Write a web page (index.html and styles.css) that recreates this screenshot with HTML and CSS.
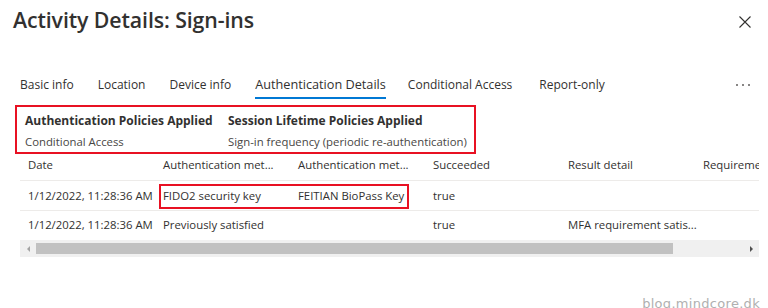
FILE: index.html
```html
<!DOCTYPE html>
<html lang="en">
<head>
<meta charset="utf-8">
<title>Activity Details: Sign-ins</title>
<link rel="stylesheet" href="styles.css">
</head>
<body>
<div class="blade">
  <header class="blade-header">
    <h1 class="blade-title">Activity Details: Sign-ins</h1>
    <button class="close-btn" aria-label="Close">
      <svg width="12" height="12" viewBox="0 0 12 12"><path d="M0.5 0.5 L11.5 11.5 M11.5 0.5 L0.5 11.5" stroke="#323130" stroke-width="1.1" fill="none"/></svg>
    </button>
  </header>

  <nav class="tabs">
    <span class="tab">Basic info</span>
    <span class="tab">Location</span>
    <span class="tab">Device info</span>
    <span class="tab active">Authentication Details</span>
    <span class="tab wide">Conditional Access</span>
    <span class="tab">Report-only</span>
    <span class="tab-more"><i></i><i></i><i></i></span>
  </nav>

  <section class="policies">
    <div class="policy first">
      <div class="policy-title">Authentication Policies Applied</div>
      <div class="policy-value">Conditional Access</div>
    </div>
    <div class="policy">
      <div class="policy-title">Session Lifetime Policies Applied</div>
      <div class="policy-value">Sign-in frequency (periodic re-authentication)</div>
    </div>
  </section>

  <div class="grid-wrap">
    <div class="grid">
      <div class="row head">
        <div class="cell">Date</div>
        <div class="cell">Authentication met...</div>
        <div class="cell">Authentication met...</div>
        <div class="cell">Succeeded</div>
        <div class="cell">Result detail</div>
        <div class="cell">Requirement</div>
      </div>
      <div class="row">
        <div class="cell">1/12/2022, 11:28:36 AM</div>
        <div class="cell">FIDO2 security key</div>
        <div class="cell">FEITIAN BioPass Key</div>
        <div class="cell">true</div>
        <div class="cell"></div>
        <div class="cell"></div>
        <div class="highlight"></div>
      </div>
      <div class="row">
        <div class="cell">1/12/2022, 11:28:36 AM</div>
        <div class="cell">Previously satisfied</div>
        <div class="cell"></div>
        <div class="cell">true</div>
        <div class="cell">MFA requirement satis...</div>
        <div class="cell"></div>
      </div>
    </div>
    <div class="hscroll">
      <span class="arrow left"></span>
      <div class="track"><div class="thumb"></div></div>
      <span class="arrow right"></span>
    </div>
  </div>

  <div class="watermark">blog.mindcore.dk</div>
</div>
</body>
</html>
```

FILE: styles.css
```css
* { box-sizing: border-box; }

html, body {
  margin: 0;
  padding: 0;
  background: #ffffff;
}

body {
  font-family: "Open Sans", "Noto Sans", "Liberation Sans", sans-serif;
  color: #323130;
  font-size: 12px;
  width: 768px;
  height: 308px;
  overflow: hidden;
}

.blade {
  position: relative;
  height: 308px;
}

.blade-header {
  display: flex;
  justify-content: space-between;
  align-items: flex-start;
  padding: 5px 17px 0 13px;
  height: 44px;
}

.blade-title {
  margin: 0;
  font-size: 21.3px;
  font-weight: 600;
  letter-spacing: -0.1px;
  line-height: 30px;
  color: #323130;
}

.close-btn {
  border: 0;
  background: none;
  padding: 0;
  width: 12px;
  height: 12px;
  display: block;
  margin-top: 11px;
}
.close-btn svg { display: block; }

.tabs {
  display: flex;
  align-items: flex-start;
  margin-top: 27px;
  padding-left: 20px;
  padding-right: 18px;
  height: 28px;
}

.tab {
  height: 28px;
  line-height: 27px;
  font-size: 12px;
  color: #323130;
  border-bottom: 2px solid transparent;
  white-space: nowrap;
  margin-right: 24px;
}

.tab.active {
  border-bottom-color: #0078d4;
  font-size: 12.7px;
  margin-right: 22px;
}

.tab.wide {
  margin-right: 27px;
}

.tab-more {
  margin-left: auto;
  display: flex;
  gap: 4px;
  height: 27px;
  align-items: center;
}
.tab-more i {
  width: 2px;
  height: 2px;
  border-radius: 1px;
  background: #605e5c;
  display: block;
}

.policies {
  display: flex;
  margin: 6px 0 0 15px;
  width: 461px;
  height: 49px;
  border: 2px solid #e81123;
  padding: 3px 0 0 8px;
}

.policy.first {
  width: 203px;
}

.policy-title {
  font-weight: 700;
  font-size: 12px;
  line-height: 21px;
  white-space: nowrap;
}

.policy-value {
  font-size: 11.35px;
  line-height: 21px;
  color: #484644;
  white-space: nowrap;
}

.grid-wrap {
  margin-left: 20px;
  width: 739px;
  overflow: hidden;
}

.grid {
  width: 739px;
  overflow: hidden;
}

.row {
  position: relative;
  display: grid;
  grid-template-columns: repeat(6, 135px);
  border-bottom: 1px solid #edebe9;
  height: 30px;
  line-height: 30px;
}

.row.head {
  height: 27px;
  line-height: 21px;
}

.row:last-child {
  border-bottom: 0;
  height: 29px;
  line-height: 28px;
}

.cell {
  padding-left: 8px;
  white-space: nowrap;
  font-size: 11.35px;
  color: #323130;
}

.highlight {
  position: absolute;
  left: 139px;
  top: 3px;
  width: 250px;
  height: 25px;
  border: 2px solid #e81123;
}

.hscroll {
  display: flex;
  align-items: center;
  height: 17px;
  background: #f0f0f0;
}

.arrow {
  width: 16px;
  height: 17px;
  display: flex;
  align-items: center;
  justify-content: center;
}
.arrow::before {
  content: "";
  width: 0;
  height: 0;
  border-top: 3px solid transparent;
  border-bottom: 3px solid transparent;
}
.arrow.left::before { border-right: 3px solid #a3a3a3; }
.arrow.right::before { border-left: 3px solid #505050; }

.track {
  flex: 1;
  height: 11px;
}

.thumb {
  width: 637px;
  height: 11px;
  background: #c1c1c1;
}

.watermark {
  position: absolute;
  right: 8px;
  bottom: -3px;
  font-family: "DejaVu Sans", sans-serif;
  font-size: 13px;
  color: #b0b0b0;
  letter-spacing: 0.3px;
}
```
